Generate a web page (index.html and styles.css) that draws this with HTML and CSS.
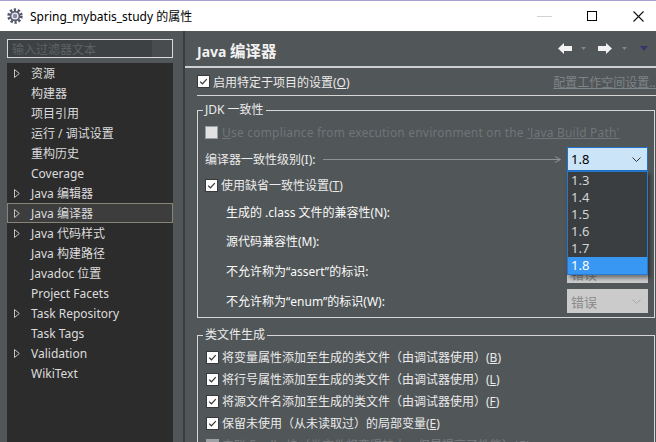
FILE: index.html
```html
<!DOCTYPE html>
<html lang="zh-CN">
<head>
<meta charset="utf-8">
<title>Spring_mybatis_study 的属性</title>
<link rel="stylesheet" href="styles.css">
</head>
<body>
<div class="window">
  <div class="titlebar">
    <svg class="app-icon" viewBox="0 0 16 16">
      <circle cx="8" cy="8" r="6.2" fill="none" stroke="#55556a" stroke-width="3" stroke-dasharray="2.2 1.7"/>
      <circle cx="8" cy="8" r="5.3" fill="#5c5c70"/>
      <circle cx="8" cy="8" r="3.6" fill="#e8e8f0"/>
      <circle cx="8" cy="8" r="2.2" fill="#8a8aa0"/>
    </svg>
    <span class="title">Spring_mybatis_study 的属性</span>
    <div class="controls">
      <span class="min"></span>
      <span class="max"></span>
      <svg class="close" viewBox="0 0 11 11"><path d="M0.5 0.5 L10.5 10.5 M10.5 0.5 L0.5 10.5" stroke="#111" stroke-width="1.1"/></svg>
    </div>
  </div>

  <div class="main">
    <aside class="sidebar">
      <div class="filter"><span class="ph">输入过滤器文本</span><span class="filter-end"></span></div>
      <ul class="tree">
        <li><svg class="tw" viewBox="0 0 6 9"><path d="M0.5 0.5 L5.3 4.5 L0.5 8.5 Z" fill="none" stroke="#c4c4c4"/></svg>资源</li>
        <li>构建器</li>
        <li>项目引用</li>
        <li>运行 / 调试设置</li>
        <li>重构历史</li>
        <li>Coverage</li>
        <li><svg class="tw" viewBox="0 0 6 9"><path d="M0.5 0.5 L5.3 4.5 L0.5 8.5 Z" fill="none" stroke="#c4c4c4"/></svg>Java 编辑器</li>
        <li class="sel"><svg class="tw" viewBox="0 0 6 9"><path d="M0.5 0.5 L5.3 4.5 L0.5 8.5 Z" fill="none" stroke="#c4c4c4"/></svg>Java 编译器</li>
        <li><svg class="tw" viewBox="0 0 6 9"><path d="M0.5 0.5 L5.3 4.5 L0.5 8.5 Z" fill="none" stroke="#c4c4c4"/></svg>Java 代码样式</li>
        <li>Java 构建路径</li>
        <li>Javadoc 位置</li>
        <li>Project Facets</li>
        <li><svg class="tw" viewBox="0 0 6 9"><path d="M0.5 0.5 L5.3 4.5 L0.5 8.5 Z" fill="none" stroke="#c4c4c4"/></svg>Task Repository</li>
        <li>Task Tags</li>
        <li><svg class="tw" viewBox="0 0 6 9"><path d="M0.5 0.5 L5.3 4.5 L0.5 8.5 Z" fill="none" stroke="#c4c4c4"/></svg>Validation</li>
        <li>WikiText</li>
      </ul>
    </aside>
    <div class="divider"></div>

    <section class="content">
      <header class="head">
        <h1>Java <span class="h-cjk">编译器</span></h1>
        <div class="nav">
          <svg class="arrow" viewBox="0 0 14 11"><path d="M0 5.5 L6 0 L6 3 L14 3 L14 8 L6 8 L6 11 Z" fill="#f2f2f2"/></svg>
          <svg class="tri t1" viewBox="0 0 5 3"><path d="M0 0 L5 0 L2.5 3 Z" fill="#80868a"/></svg>
          <svg class="arrow" viewBox="0 0 14 11"><path d="M14 5.5 L8 0 L8 3 L0 3 L0 8 L8 8 L8 11 Z" fill="#f2f2f2"/></svg>
          <svg class="tri t2" viewBox="0 0 5 3"><path d="M0 0 L5 0 L2.5 3 Z" fill="#80868a"/></svg>
          <svg class="menu-tri" viewBox="0 0 8 5"><path d="M0 0 L8 0 L4 5 Z" fill="#3b3470"/></svg>
        </div>
      </header>
      <div class="hr"></div>

      <div class="row-enable">
        <span class="cb"><svg viewBox="0 0 13 13"><path d="M2.6 6.6 L5.2 9.2 L10.4 3.6" fill="none" stroke="#333" stroke-width="1.4"/></svg></span>
        <span>启用特定于项目的设置(<u>O</u>)</span>
        <span class="ws-link">配置工作空间设置...</span>
      </div>
      <div class="sep"></div>

      <div class="group jdk">
        <span class="legend">JDK 一致性</span>
        <div class="row r-comp">
          <span class="cb off"></span>
          <span class="comp-text"><u>U</u>se compliance from execution environment on the <u>'Java Build Path'</u></span>
        </div>
        <div class="row r-level">
          <span>编译器一致性级别(I):</span>
          <span class="guide"><svg viewBox="0 0 6 7"><path d="M0 0.5 L5.5 3.5 L0 6.5" fill="none" stroke="#8d9294" stroke-width="1"/></svg></span>
          <div class="combo active">
            <span class="val">1.8</span>
            <svg class="chev" viewBox="0 0 9 5"><path d="M0.5 0.5 L4.5 4.5 L8.5 0.5" fill="none" stroke="#333" stroke-width="1"/></svg>
            <ul class="droplist">
              <li>1.3</li>
              <li>1.4</li>
              <li>1.5</li>
              <li>1.6</li>
              <li>1.7</li>
              <li class="on">1.8</li>
            </ul>
          </div>
        </div>
        <div class="row r-default">
          <span class="cb"><svg viewBox="0 0 13 13"><path d="M2.6 6.6 L5.2 9.2 L10.4 3.6" fill="none" stroke="#333" stroke-width="1.4"/></svg></span>
          <span>使用缺省一致性设置(<u>T</u>)</span>
        </div>
        <div class="row r-sub m5">
          <span class="sub">生成的 .class 文件的兼容性(N):</span>
          <div class="combo dis"></div>
        </div>
        <div class="row r-sub m5">
          <span class="sub">源代码兼容性(M):</span>
          <div class="combo dis"></div>
        </div>
        <div class="row r-sub m6">
          <span class="sub">不允许称为“assert”的标识:</span>
          <div class="combo dis low"><span class="val">错误</span></div>
        </div>
        <div class="row r-sub m6">
          <span class="sub">不允许称为“enum”的标识(W):</span>
          <div class="combo dis"><span class="val">错误</span><svg class="chev" viewBox="0 0 9 5"><path d="M0.5 0.5 L4.5 4.5 L8.5 0.5" fill="none" stroke="#a8a8a8" stroke-width="1"/></svg></div>
        </div>
      </div>

      <div class="group cls">
        <span class="legend">类文件生成</span>
        <div class="crow">
          <span class="cb"><svg viewBox="0 0 13 13"><path d="M2.6 6.6 L5.2 9.2 L10.4 3.6" fill="none" stroke="#333" stroke-width="1.4"/></svg></span>
          <span>将变量属性添加至生成的类文件（由调试器使用）(<u>B</u>)</span>
        </div>
        <div class="crow">
          <span class="cb"><svg viewBox="0 0 13 13"><path d="M2.6 6.6 L5.2 9.2 L10.4 3.6" fill="none" stroke="#333" stroke-width="1.4"/></svg></span>
          <span>将行号属性添加至生成的类文件（由调试器使用）(<u>L</u>)</span>
        </div>
        <div class="crow">
          <span class="cb"><svg viewBox="0 0 13 13"><path d="M2.6 6.6 L5.2 9.2 L10.4 3.6" fill="none" stroke="#333" stroke-width="1.4"/></svg></span>
          <span>将源文件名添加至生成的类文件（由调试器使用）(<u>F</u>)</span>
        </div>
        <div class="crow">
          <span class="cb"><svg viewBox="0 0 13 13"><path d="M2.6 6.6 L5.2 9.2 L10.4 3.6" fill="none" stroke="#333" stroke-width="1.4"/></svg></span>
          <span>保留未使用（从未读取过）的局部变量(<u>E</u>)</span>
        </div>
        <div class="crow dim">
          <span class="cb off2"></span>
          <span>内联 finally 块（类文件将变得较大，但是提高了性能）(<u>G</u>)</span>
        </div>
      </div>
    </section>
  </div>
</div>
</body>
</html>
```

FILE: styles.css
```css
* { box-sizing: border-box; margin: 0; padding: 0; }
html, body { width: 656px; height: 442px; overflow: hidden; }
body {
  font-family: "Noto Sans", "Noto Sans CJK SC", sans-serif;
  font-size: 12px;
  background: #515658;
  color: #ebebeb;
}
.window { width: 656px; height: 442px; display: flex; flex-direction: column; }

/* title bar */
.titlebar {
  height: 31px; flex-shrink: 0; background: #fff; color: #000;
  border-top: 1px solid #a79fcf;
  display: flex; align-items: center;
}
.app-icon { width: 16px; height: 16px; margin-left: 7px; }
.title { margin-left: 7px; font-size: 12px; }
.controls { margin-left: auto; display: flex; align-items: center; }
.min { width: 15px; height: 1px; background: #d2d2d2; margin-right: 35px; }
.max { width: 10px; height: 10px; border: 1px solid #000; margin-right: 36px; }
.close { width: 11px; height: 11px; margin-right: 12px; }

/* main */
.main { flex: 1; display: flex; min-height: 0; overflow: hidden; }

.sidebar { width: 183px; flex-shrink: 0; padding: 8px 10px 0 7px; display: flex; flex-direction: column; }
.filter {
  height: 19px; border: 1px solid #dadada; background: #3e4143;
  display: flex; align-items: center;
}
.ph { color: #5d6164; padding-left: 4px; font-size: 12px; }
.filter-end { margin-left: auto; width: 20px; height: 100%; background: #494c4e; }
.tree { margin-top: 5px; flex: 1; background: #2c2c2c; list-style: none; }
.tree li {
  height: 20px; display: flex; align-items: center; padding-left: 24px;
  color: #dcdcdc; position: relative; white-space: nowrap;
}
.tw { position: absolute; left: 7px; top: 6px; width: 6px; height: 9px; }
.tree li.sel { background: #3d3d3d; box-shadow: inset 0 0 0 1px #878478; }

.divider { width: 2px; flex-shrink: 0; background: #3a3d3f; }

/* content */
.content { flex: 1; display: flex; flex-direction: column; min-width: 0; }
.head { height: 35px; flex-shrink: 0; display: flex; align-items: center; padding: 3px 8px 0 12px; }
.head h1 { font-size: 14px; font-weight: bold; color: #f2f2f2; }
.h-cjk { font-size: 15.5px; }
.nav { margin-left: auto; display: flex; align-items: center; margin-top: -4px; }
.arrow { width: 14px; height: 11px; }
.tri { width: 5px; height: 3px; }
.t1 { margin: 0 12px 0 9px; }
.t2 { margin: 0 13px 0 10px; }
.menu-tri { width: 8px; height: 5px; }

.hr { height: 2px; flex-shrink: 0; background: #cfcfcf; }

.row-enable { height: 27px; flex-shrink: 0; display: flex; align-items: center; padding-left: 12px; }
.cb {
  width: 13px; height: 13px; flex-shrink: 0; background: #fdfdfd;
  border: 1px solid #3a3a3a; margin-right: 3px; display: flex;
}
.cb svg { width: 11px; height: 11px; }
.cb.off { background: #e2e2e2; border-color: #9a9ea0; margin-right: 4px; }
.cb.off2 { background: #9ea1a3; border-color: #9ea1a3; }
.ws-link { margin-left: auto; color: #7e8487; text-decoration: underline; white-space: nowrap; margin-right: -3px; }

.sep { height: 1px; flex-shrink: 0; background: #d5d5d5; margin-left: 12px; }

.group {
  position: relative; flex-shrink: 0;
  margin-left: 12px; margin-right: 1px;
  border: 1px solid #d6d6d6;
}
.legend {
  position: absolute; top: -9px; left: 5px; padding: 0 2px;
  background: #515658; color: #ececec; line-height: 16px;
}
.jdk { margin-top: 14px; padding: 11px 6px 4px 7px; }
.row { display: flex; align-items: center; height: 24px; white-space: nowrap; }
.r-comp { height: 20px; color: #6f7578; }
.comp-text { letter-spacing: 0.2px; }
.r-level { margin-top: 5px; }
.r-default { height: 20px; margin-top: 4px; }
.m5 { margin-top: 5px; }
.m6 { margin-top: 6px; }
.sub { padding-left: 21px; color: #fafafa; }

.guide { flex: 1; height: 1px; background: #8d9294; margin: 0 7px 0 7px; position: relative; }
.guide svg { position: absolute; right: -1px; top: -3px; width: 6px; height: 7px; }

.combo {
  width: 81px; height: 24px; margin-left: auto; flex-shrink: 0;
  display: flex; align-items: center; padding: 0 6px 0 3px;
  position: relative; font-size: 13px;
}
.combo .chev { width: 9px; height: 5px; margin-left: auto; }
.combo.active { background: #cce4f7; border: 1px solid #1f73c9; color: #000; margin-left: 0; }
.combo.dis { background: #cbcbcb; border: 1px solid #cbcbcb; color: #8a8a8a; }
.combo.low { align-items: flex-end; padding-bottom: 1px; line-height: 14px; }

.droplist {
  position: absolute; top: 23px; left: -1px; width: 81px; z-index: 5;
  list-style: none; background: #3b3e41; border: 1px solid #2679cf;
  box-shadow: 2px 3px 4px rgba(0, 0, 0, 0.45);
}
.droplist li { height: 17px; line-height: 17px; padding-left: 3px; color: #d4d4d4; font-size: 13px; }
.droplist li.on { background: #3897f2; color: #fff; }

.cls { margin-top: 17px; padding: 10px 6px 0 8px; }
.crow { height: 22px; display: flex; align-items: center; white-space: nowrap; }
.crow.dim { color: #767b7e; }
```
